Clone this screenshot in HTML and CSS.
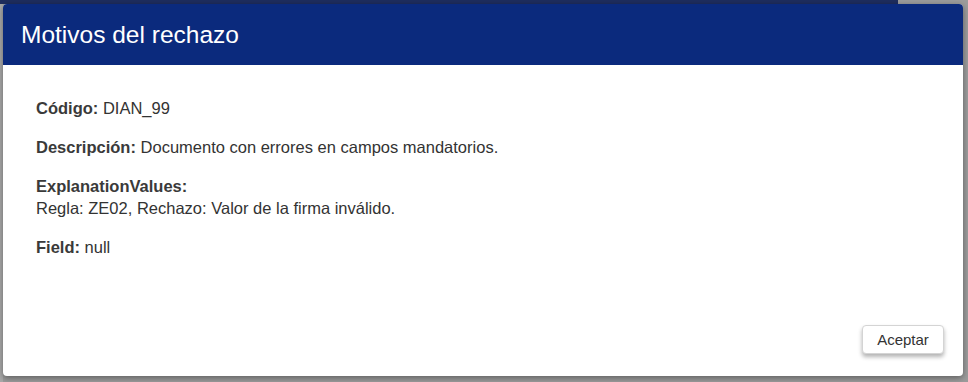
FILE: index.html
```html
<!DOCTYPE html>
<html lang="es">
<head>
<meta charset="utf-8">
<title>Motivos del rechazo</title>
<link rel="stylesheet" href="styles.css">
</head>
<body>
<div class="backdrop">
  <div class="topstrip"></div>
  <div class="dialog">
    <div class="dialog-header">
      <h2 class="dialog-title">Motivos del rechazo</h2>
    </div>
    <div class="dialog-body">
      <p class="item"><b>Código:</b> DIAN_99</p>
      <p class="item"><b>Descripción:</b> Documento con errores en campos mandatorios.</p>
      <p class="item"><b>ExplanationValues:</b><br>Regla: ZE02, Rechazo: Valor de la firma inválido.</p>
      <p class="item"><b>Field:</b> null</p>
    </div>
    <div class="dialog-footer">
      <button class="btn">Aceptar</button>
    </div>
  </div>
</div>
</body>
</html>
```
FILE: styles.css
```css
* { box-sizing: border-box; }
html, body { margin: 0; padding: 0; }
body {
  width: 968px;
  height: 382px;
  overflow: hidden;
  background: #6f6f6f;
  font-family: "Liberation Sans", Arial, sans-serif;
}
.backdrop {
  position: relative;
  width: 968px;
  height: 382px;
  padding: 4px 5px 6px 3px;
  background: linear-gradient(to right, #a9a9a9 0, #a9a9a9 3px, #9c9c9c 3px);
}
.topstrip {
  position: absolute;
  left: 0;
  top: 0;
  width: 898px;
  height: 4px;
  background: #1e2d5e;
}
.dialog {
  position: relative;
  width: 960px;
  height: 372px;
  background: #ffffff;
  border-radius: 4px;
  overflow: hidden;
  display: flex;
  flex-direction: column;
  box-shadow: 0 2px 6px rgba(0,0,0,0.4);
}
.dialog-header {
  height: 61px;
  background: #0b2a7d;
  display: flex;
  align-items: center;
  padding: 0 18px;
}
.dialog-title {
  margin: 0;
  color: #ffffff;
  font-weight: normal;
  font-size: 24.5px;
  padding-top: 1px;
  letter-spacing: 0;
}
.dialog-body {
  flex: 1;
  padding: 32px 33px 0;
  color: #333333;
  font-size: 16.5px;
  line-height: 22px;
}
.item {
  margin: 0 0 17px;
}
.item b {
  font-weight: bold;
  color: #3a3a3a;
}
.dialog-footer {
  display: flex;
  justify-content: flex-end;
  padding: 0 19px 22px;
}
.btn {
  width: 82px;
  height: 29px;
  background: #ffffff;
  border: 1px solid #d4d4d4;
  border-radius: 4px;
  box-shadow: 0 3px 4px rgba(0,0,0,0.3);
  font-family: "Liberation Sans", Arial, sans-serif;
  font-size: 15px;
  color: #333333;
  padding: 0;
}
```
